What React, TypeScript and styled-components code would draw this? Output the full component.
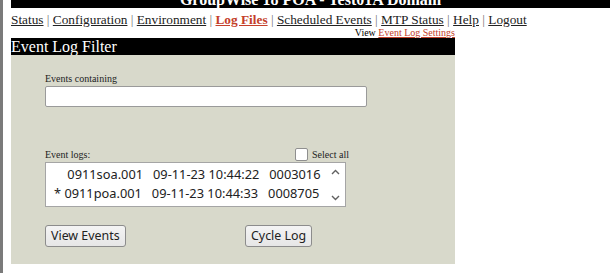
import styled, { createGlobalStyle } from 'styled-components';

const GlobalStyle = createGlobalStyle`
  html,
  body {
    margin: 0;
    padding: 0;
    background: #fff;
    font-family: 'Liberation Serif', 'Times New Roman', serif;
  }
`;

const Page = styled.div`
  display: flex;
  min-height: 273px;
  border-left: 3px solid #7a7a7a;
  padding-left: 8px;
  overflow: hidden;
`;

const Main = styled.div`
  flex: 1;
  display: flex;
  flex-direction: column;
`;

// the window is scrolled a little, so only the lower half of the heading shows
const TopBar = styled.header`
  height: 8px;
  background: #000;
  overflow: hidden;
  display: flex;
  justify-content: center;
  align-items: flex-end;

  & span {
    color: #fff;
    font-weight: 700;
    font-size: 16px;
    line-height: 16px;
    white-space: nowrap;
  }
`;

const Nav = styled.nav`
  padding: 4px 0 0;
  font-size: 13.3px;
  line-height: 15px;
  white-space: nowrap;
  color: #777;
`;

const NavLink = styled.a<{ $active?: boolean }>`
  color: ${(p) => (p.$active ? '#c4402a' : '#222')};
  font-weight: ${(p) => (p.$active ? 700 : 400)};
  text-decoration: underline;
`;

const Section = styled.section`
  width: 444px;
  display: flex;
  flex-direction: column;
`;

const SubNav = styled.div`
  text-align: right;
  font-size: 10px;
  line-height: 11px;
  color: #000;

  & a {
    color: #c4402a;
    text-decoration: underline;
  }
`;

const TitleBar = styled.h2`
  margin: 0;
  height: 17px;
  background: #000;
  color: #fff;
  font-size: 16px;
  font-weight: 400;
  line-height: 17px;
`;

const Panel = styled.div`
  background: #d8d9cb;
  padding: 18px 0 17px 34px;
  display: flex;
  flex-direction: column;
`;

const SmallLabel = styled.label`
  display: block;
  font-size: 10px;
  line-height: 12px;
  color: #222;
`;

const TextInput = styled.input`
  box-sizing: border-box;
  margin-top: 1px;
  width: 322px;
  height: 21px;
  border: 1px solid #9a9a9a;
  border-radius: 2px;
  background: #fff;
  padding: 0 4px;
`;

const LogsHeader = styled.div`
  margin-top: 39px;
  width: 304px;
  height: 16px;
  display: flex;
  justify-content: space-between;
  align-items: flex-end;
  padding-bottom: 1px;
  box-sizing: border-box;
`;

const SelectAll = styled.label`
  display: flex;
  align-items: center;
  gap: 4px;
  font-size: 10px;
  line-height: 12px;
  color: #222;
`;

const Checkbox = styled.span`
  box-sizing: border-box;
  width: 13px;
  height: 13px;
  border: 1px solid #8f8f8f;
  border-radius: 2px;
  background: #fff;
`;

const ListBox = styled.div`
  box-sizing: border-box;
  width: 301px;
  height: 45px;
  border: 1px solid #a5a5a5;
  background: #fff;
  display: flex;
`;

const Rows = styled.ul`
  flex: 1;
  min-width: 0;
  margin: 0;
  padding: 2px 0 0 8px;
  list-style: none;
  overflow: hidden;
`;

const Row = styled.li`
  height: 19px;
  line-height: 19px;
  font-family: 'Noto Sans', 'DejaVu Sans', sans-serif;
  font-size: 12.8px;
  color: #222;
  white-space: pre;
`;

const ScrollBar = styled.div`
  flex: 0 0 20px;
  display: flex;
  flex-direction: column;
  justify-content: space-between;
  align-items: center;
  padding: 6px 0 5px;
`;

const ButtonRow = styled.div`
  margin-top: 18px;
  display: grid;
  grid-template-columns: 200px auto;
  justify-items: start;
`;

const Button = styled.button`
  height: 22px;
  padding: 0 5px;
  border: 1px solid #8c8c8c;
  border-radius: 3px;
  background: linear-gradient(#f4f4f4, #e6e6e6);
  font-family: 'Noto Sans', 'DejaVu Sans', sans-serif;
  font-size: 12.4px;
  color: #222;
  line-height: 20px;
`;

const Chevron = ({ up }: { up?: boolean }) => (
  <svg width="9" height="6" viewBox="0 0 9 6">
    <path
      d={up ? 'M1 5 L4.5 1.5 L8 5' : 'M1 1 L4.5 4.5 L8 1'}
      fill="none"
      stroke="#606060"
      strokeWidth="1.4"
    />
  </svg>
);

const navItems = [
  'Status',
  'Configuration',
  'Environment',
  'Log Files',
  'Scheduled Events',
  'MTP Status',
  'Help',
  'Logout',
];

const logs = [
  '    0911soa.001   09-11-23 10:44:22   0003016',
  '* 0911poa.001   09-11-23 10:44:33   0008705',
];

function App() {
  return (
    <>
      <GlobalStyle />
      <Page>
        <Main>
          <TopBar>
            <span>GroupWise 18 POA - Test01A Domain</span>
          </TopBar>
          <Nav>
            {navItems.map((item, i) => (
              <span key={item}>
                {i > 0 && ' | '}
                <NavLink href="#" $active={item === 'Log Files'}>
                  {item}
                </NavLink>
              </span>
            ))}
          </Nav>
          <Section>
            <SubNav>
              View <a href="#">Event Log Settings</a>
            </SubNav>
            <TitleBar>Event Log Filter</TitleBar>
            <Panel>
              <SmallLabel htmlFor="events-containing">Events containing</SmallLabel>
              <TextInput id="events-containing" type="text" />
              <LogsHeader>
                <SmallLabel>Event logs:</SmallLabel>
                <SelectAll>
                  <Checkbox />
                  Select all
                </SelectAll>
              </LogsHeader>
              <ListBox>
                <Rows>
                  {logs.map((log) => (
                    <Row key={log}>{log}</Row>
                  ))}
                </Rows>
                <ScrollBar>
                  <Chevron up />
                  <Chevron />
                </ScrollBar>
              </ListBox>
              <ButtonRow>
                <Button>View Events</Button>
                <Button>Cycle Log</Button>
              </ButtonRow>
            </Panel>
          </Section>
        </Main>
      </Page>
    </>
  );
}

export default App;
